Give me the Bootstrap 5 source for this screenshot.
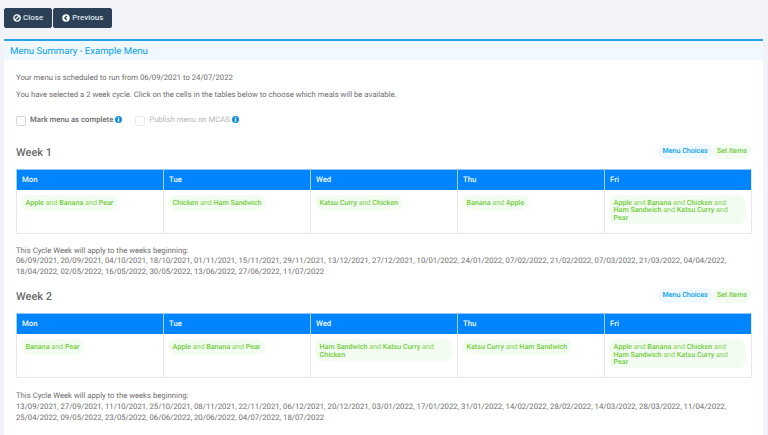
<!DOCTYPE html>
<html lang="en">
<head>
<meta charset="utf-8">
<title>Menu Summary</title>
<link href="https://cdn.jsdelivr.net/npm/bootstrap@5.3.0/dist/css/bootstrap.min.css" rel="stylesheet">
<style>
html,body{height:435px;overflow:hidden}
body{background:#f1f3f8;font-family:Roboto,"Liberation Sans",sans-serif;font-size:7.72px;line-height:10.7px;color:#6c6c6c;padding:8px 5px 0 4px;text-rendering:geometricPrecision}
.act-btn{background:#2c4058;border:1px solid #2c4058;color:#dfe4ea;font-size:8px;line-height:10px;font-weight:500;height:20px;padding:0 8px 0 8px;border-radius:2px;display:flex;align-items:center;gap:2px}
.act-btn svg{width:8px;height:8px}
.act-gap{gap:1px}
.sheet{margin-top:11px;background:#fff;border-top:2px solid #2ba3e3;height:396px}
.sheet-head{background:#eff9ff;color:#0a9fe8;font-size:9.6px;line-height:12px;height:19px;padding:5px 6px 0}
.sheet-body{padding:12.5px 12px 0}
.sheet-body p{margin:0 0 6.3px}
.checks{margin-top:13.5px;height:14px;font-weight:500}
.tick{width:10px;height:10px;border:1px solid #d5d5d5;border-radius:2px;background:#fff;margin-right:4px}
.tick.off{border-color:#ececec;margin-left:13px}
.muted-lab{color:#b5b5b5;font-weight:400}
.info{width:7px;height:7px;margin:0 0 2px 2px}
.wk-head{height:16px;margin-top:17px}
.wk-head.second{margin-top:11px}
.wk-title{font-size:11px;line-height:16px;font-weight:500;color:#6c6c6c}
.tag-row{margin-top:-3px}
.tagx{font-size:7.1px;line-height:8px;font-weight:500;border-radius:8px;padding:3.5px 5px}
.tagx.blu{background:#eff9ff;color:#0a9fe8}
.tagx.grn{background:#f3fcf0;color:#6fcb3a;padding:3.5px 4px}
.wk-grid{display:grid;grid-template-columns:repeat(5,147px);margin-top:8px;border-right:1px solid #e6e8ec;width:736px}
.day{background:#0085ff;color:#f4f9ff;font-size:7.72px;font-weight:500;height:21px;padding:0 5px;line-height:20px;border-left:1px solid #a8d3f8;border-top:1px solid #8fc6f8}
.cellx{height:44px;padding:5px 5px 0 4px;border-left:1px solid #e6e8ec;border-bottom:1px solid #e6e8ec}
.pill{display:inline-block;vertical-align:top;background:#f3fcf0;color:#7fd152;border-radius:8px;font-size:7.15px;line-height:7.2px;padding:4.5px 4.5px 3.5px;font-weight:400}
.pill b{font-weight:500;color:#6fcb3a}
.cycle{margin-top:12px;white-space:nowrap}
.cycle.two{margin-top:13.5px}
</style>
</head>
<body>
<div class="d-flex act-gap">
  <button class="btn act-btn" type="button"><svg viewBox="0 0 16 16"><circle cx="8" cy="8" r="6.2" fill="none" stroke="#fff" stroke-width="2.6"/><path d="M3.8 12.2 12.2 3.8" stroke="#fff" stroke-width="2.4"/></svg>Close</button>
  <button class="btn act-btn" type="button"><svg viewBox="0 0 16 16"><circle cx="8" cy="8" r="7.5" fill="#fff"/><path d="M9.8 4 5.6 8l4.2 4" fill="none" stroke="#2c4058" stroke-width="2.6"/></svg>Previous</button>
</div>
<div class="sheet">
  <div class="sheet-head">Menu Summary - Example Menu</div>
  <div class="sheet-body">
    <p>Your menu is scheduled to run from 06/09/2021 to 24/07/2022</p>
    <p>You have selected a 2 week cycle. Click on the cells in the tables below to choose which meals will be available.</p>
    <div class="checks d-flex align-items-center">
      <span class="tick"></span><span>Mark menu as complete</span>
      <svg class="info" viewBox="0 0 16 16"><circle cx="8" cy="8" r="8" fill="#0a8fe0"/><rect x="6.4" y="3" width="3.2" height="3" fill="#fff"/><rect x="6.4" y="7" width="3.2" height="6" fill="#fff"/></svg>
      <span class="tick off"></span><span class="muted-lab">Publish menu on MCAS</span>
      <svg class="info" viewBox="0 0 16 16"><circle cx="8" cy="8" r="8" fill="#0a8fe0"/><rect x="6.4" y="3" width="3.2" height="3" fill="#fff"/><rect x="6.4" y="7" width="3.2" height="6" fill="#fff"/></svg>
    </div>

    <div class="wk-head d-flex justify-content-between align-items-center">
      <div class="wk-title">Week 1</div>
      <div class="d-flex tag-row"><span class="tagx blu">Menu Choices</span><span class="tagx grn">Set Items</span></div>
    </div>
    <div class="wk-grid">
      <div class="day">Mon</div><div class="day">Tue</div><div class="day">Wed</div><div class="day">Thu</div><div class="day">Fri</div>
      <div class="cellx"><span class="pill"><b>Apple</b> and <b>Banana</b> and <b>Pear</b></span></div>
      <div class="cellx"><span class="pill"><b>Chicken</b> and <b>Ham Sandwich</b></span></div>
      <div class="cellx"><span class="pill"><b>Katsu Curry</b> and <b>Chicken</b></span></div>
      <div class="cellx"><span class="pill"><b>Banana</b> and <b>Apple</b></span></div>
      <div class="cellx"><span class="pill"><b>Apple</b> and <b>Banana</b> and <b>Chicken</b> and <b>Ham Sandwich</b> and <b>Katsu Curry</b> and <b>Pear</b></span></div>
    </div>
    <div class="cycle">This Cycle Week will apply to the weeks beginning:<br>06/09/2021, 20/09/2021, 04/10/2021, 18/10/2021, 01/11/2021, 15/11/2021, 29/11/2021, 13/12/2021, 27/12/2021, 10/01/2022, 24/01/2022, 07/02/2022, 21/02/2022, 07/03/2022, 21/03/2022, 04/04/2022,<br>18/04/2022, 02/05/2022, 16/05/2022, 30/05/2022, 13/06/2022, 27/06/2022, 11/07/2022</div>

    <div class="wk-head second d-flex justify-content-between align-items-center">
      <div class="wk-title">Week 2</div>
      <div class="d-flex tag-row"><span class="tagx blu">Menu Choices</span><span class="tagx grn">Set Items</span></div>
    </div>
    <div class="wk-grid">
      <div class="day">Mon</div><div class="day">Tue</div><div class="day">Wed</div><div class="day">Thu</div><div class="day">Fri</div>
      <div class="cellx"><span class="pill"><b>Banana</b> and <b>Pear</b></span></div>
      <div class="cellx"><span class="pill"><b>Apple</b> and <b>Banana</b> and <b>Pear</b></span></div>
      <div class="cellx"><span class="pill"><b>Ham Sandwich</b> and <b>Katsu Curry</b> and <b>Chicken</b></span></div>
      <div class="cellx"><span class="pill"><b>Katsu Curry</b> and <b>Ham Sandwich</b></span></div>
      <div class="cellx"><span class="pill"><b>Apple</b> and <b>Banana</b> and <b>Chicken</b> and <b>Ham Sandwich</b> and <b>Katsu Curry</b> and <b>Pear</b></span></div>
    </div>
    <div class="cycle two">This Cycle Week will apply to the weeks beginning:<br>13/09/2021, 27/09/2021, 11/10/2021, 25/10/2021, 08/11/2021, 22/11/2021, 06/12/2021, 20/12/2021, 03/01/2022, 17/01/2022, 31/01/2022, 14/02/2022, 28/02/2022, 14/03/2022, 28/03/2022, 11/04/2022,<br>25/04/2022, 09/05/2022, 23/05/2022, 06/06/2022, 20/06/2022, 04/07/2022, 18/07/2022</div>
  </div>
</div>
<script src="https://cdn.jsdelivr.net/npm/bootstrap@5.3.0/dist/js/bootstrap.bundle.min.js"></script>
</body>
</html>
